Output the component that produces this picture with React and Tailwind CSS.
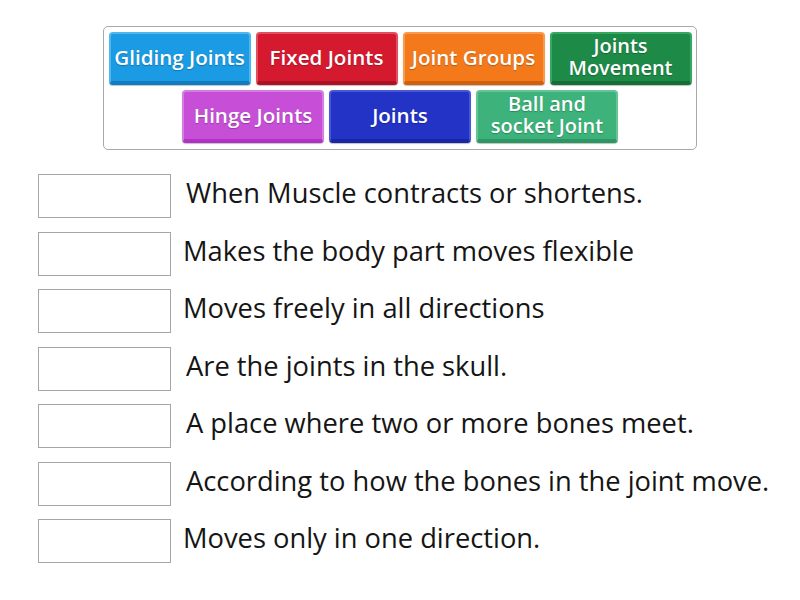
const TILES = [
  [
    { label: 'Gliding Joints', bg: 'bg-[#1a9be3]', edge: 'border-[#4fb6ee]', low: 'border-b-[#137cc0]' },
    { label: 'Fixed Joints', bg: 'bg-[#d51a30]', edge: 'border-[#e2505f]', low: 'border-b-[#ad1224]' },
    { label: 'Joint Groups', bg: 'bg-[#f3791a]', edge: 'border-[#f89b4e]', low: 'border-b-[#d1600c]' },
    { label: ['Joints', 'Movement'], bg: 'bg-[#1e8a47]', edge: 'border-[#37a862]', low: 'border-b-[#166e37]' },
  ],
  [
    { label: 'Hinge Joints', bg: 'bg-[#c74fd8]', edge: 'border-[#d57ee2]', low: 'border-b-[#b131c4]' },
    { label: 'Joints', bg: 'bg-[#2233c6]', edge: 'border-[#4857d8]', low: 'border-b-[#1a27a3]' },
    { label: ['Ball and', 'socket Joint'], bg: 'bg-[#3db27b]', edge: 'border-[#66c597]', low: 'border-b-[#2d9763]' },
  ],
];

const CLUES = [
  { text: 'When Muscle contracts or shortens.', pad: 'pl-[15px]' },
  { text: 'Makes the body part moves flexible', pad: 'pl-[12px]' },
  { text: 'Moves freely in all directions', pad: 'pl-[12px]' },
  { text: 'Are the joints in the skull.', pad: 'pl-[15px]' },
  { text: 'A place where two or more bones meet.', pad: 'pl-[15px]' },
  { text: 'According to how the bones in the joint move.', pad: 'pl-[15px]' },
  { text: 'Moves only in one direction.', pad: 'pl-[12px]' },
];

function Tile({ tile }) {
  const twoLine = Array.isArray(tile.label);
  return (
    <div
      className={`flex h-[53px] w-[142px] flex-col items-center justify-center rounded-[4px] border-2 border-b-[4px] pb-[1px] ${tile.bg} ${tile.edge} ${tile.low} text-white font-semibold shadow-[0_1px_1px_rgba(0,0,0,0.25)] [text-shadow:0_1px_1px_rgba(0,0,0,0.25)]`}
    >
      {twoLine ? (
        <span className="text-center text-[20px] leading-[22px]">
          {tile.label[0]}
          <br />
          {tile.label[1]}
        </span>
      ) : (
        <span className="text-[20.6px] leading-[26px]">{tile.label}</span>
      )}
    </div>
  );
}

export default function App() {
  return (
    <div className="h-[600px] w-[800px] bg-white font-['Open_Sans',sans-serif] text-[#151515]">
      <div className="pt-[26px] pl-[103px]">
        <div className="flex w-[594px] flex-col items-center gap-[5px] rounded-[5px] border border-[#a8a8a8] px-[6px] pt-[5px] pb-[6px]">
          {TILES.map((row, i) => (
            <div key={i} className="flex gap-[5px]">
              {row.map((tile) => (
                <Tile key={String(tile.label)} tile={tile} />
              ))}
            </div>
          ))}
        </div>
      </div>

      <div className="mt-[24px] flex flex-col gap-[13.5px] pl-[38px]">
        {CLUES.map((clue) => (
          <div key={clue.text} className="flex items-center">
            <div className="h-[44px] w-[133px] shrink-0 border border-[#a6a6a6] bg-white" />
            <span className={`${clue.pad} pb-[6px] text-[27.3px] leading-[32px]`}>{clue.text}</span>
          </div>
        ))}
      </div>
    </div>
  );
}
